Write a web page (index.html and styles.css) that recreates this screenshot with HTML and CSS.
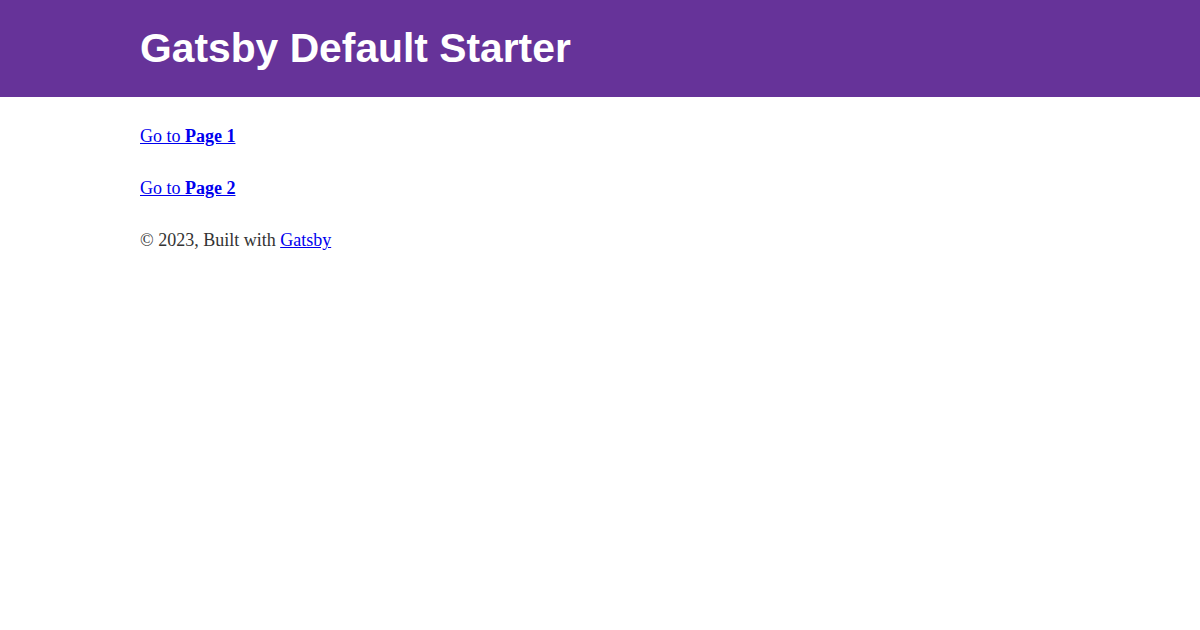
FILE: index.html
```html
<!DOCTYPE html>
<html lang="en">
<head>
  <meta charset="UTF-8">
  <title>Gatsby Default Starter</title>
  <link rel="stylesheet" href="styles.css">
</head>
<body>
  <header class="site-header">
    <div class="container">
      <h1 class="site-title"><a href="/">Gatsby Default Starter</a></h1>
    </div>
  </header>

  <div class="container">
    <main>
      <p><a href="/page-1">Go to <b>Page 1</b></a></p>
      <p><a href="/page-2">Go to <b>Page 2</b></a></p>
    </main>
    <footer class="site-footer">
      © 2023, Built with <a href="https://www.gatsbyjs.com">Gatsby</a>
    </footer>
  </div>
</body>
</html>
```

FILE: styles.css
```css
html {
  font-size: 18px;
}

body {
  margin: 0;
  font-family: "Liberation Serif", "Times New Roman", serif;
  font-size: 18px;
  line-height: 1.45;
  color: #333;
  background: #fff;
}

a {
  color: #0000ee;
}

.container {
  max-width: 920px;
  margin: 0 auto;
  padding: 0 20px;
}

.site-header {
  background: rebeccapurple;
  margin-bottom: 26px;
}

.site-header .container {
  padding-top: 26px;
  padding-bottom: 26px;
}

.site-title {
  margin: 0;
  font-family: "Liberation Sans", Arial, sans-serif;
  font-size: 40.8px;
  line-height: 1.1;
}

.site-title a {
  color: #fff;
  text-decoration: none;
}

main p {
  margin: 0 0 26px;
}

.site-footer {
  margin: 0;
}
```
